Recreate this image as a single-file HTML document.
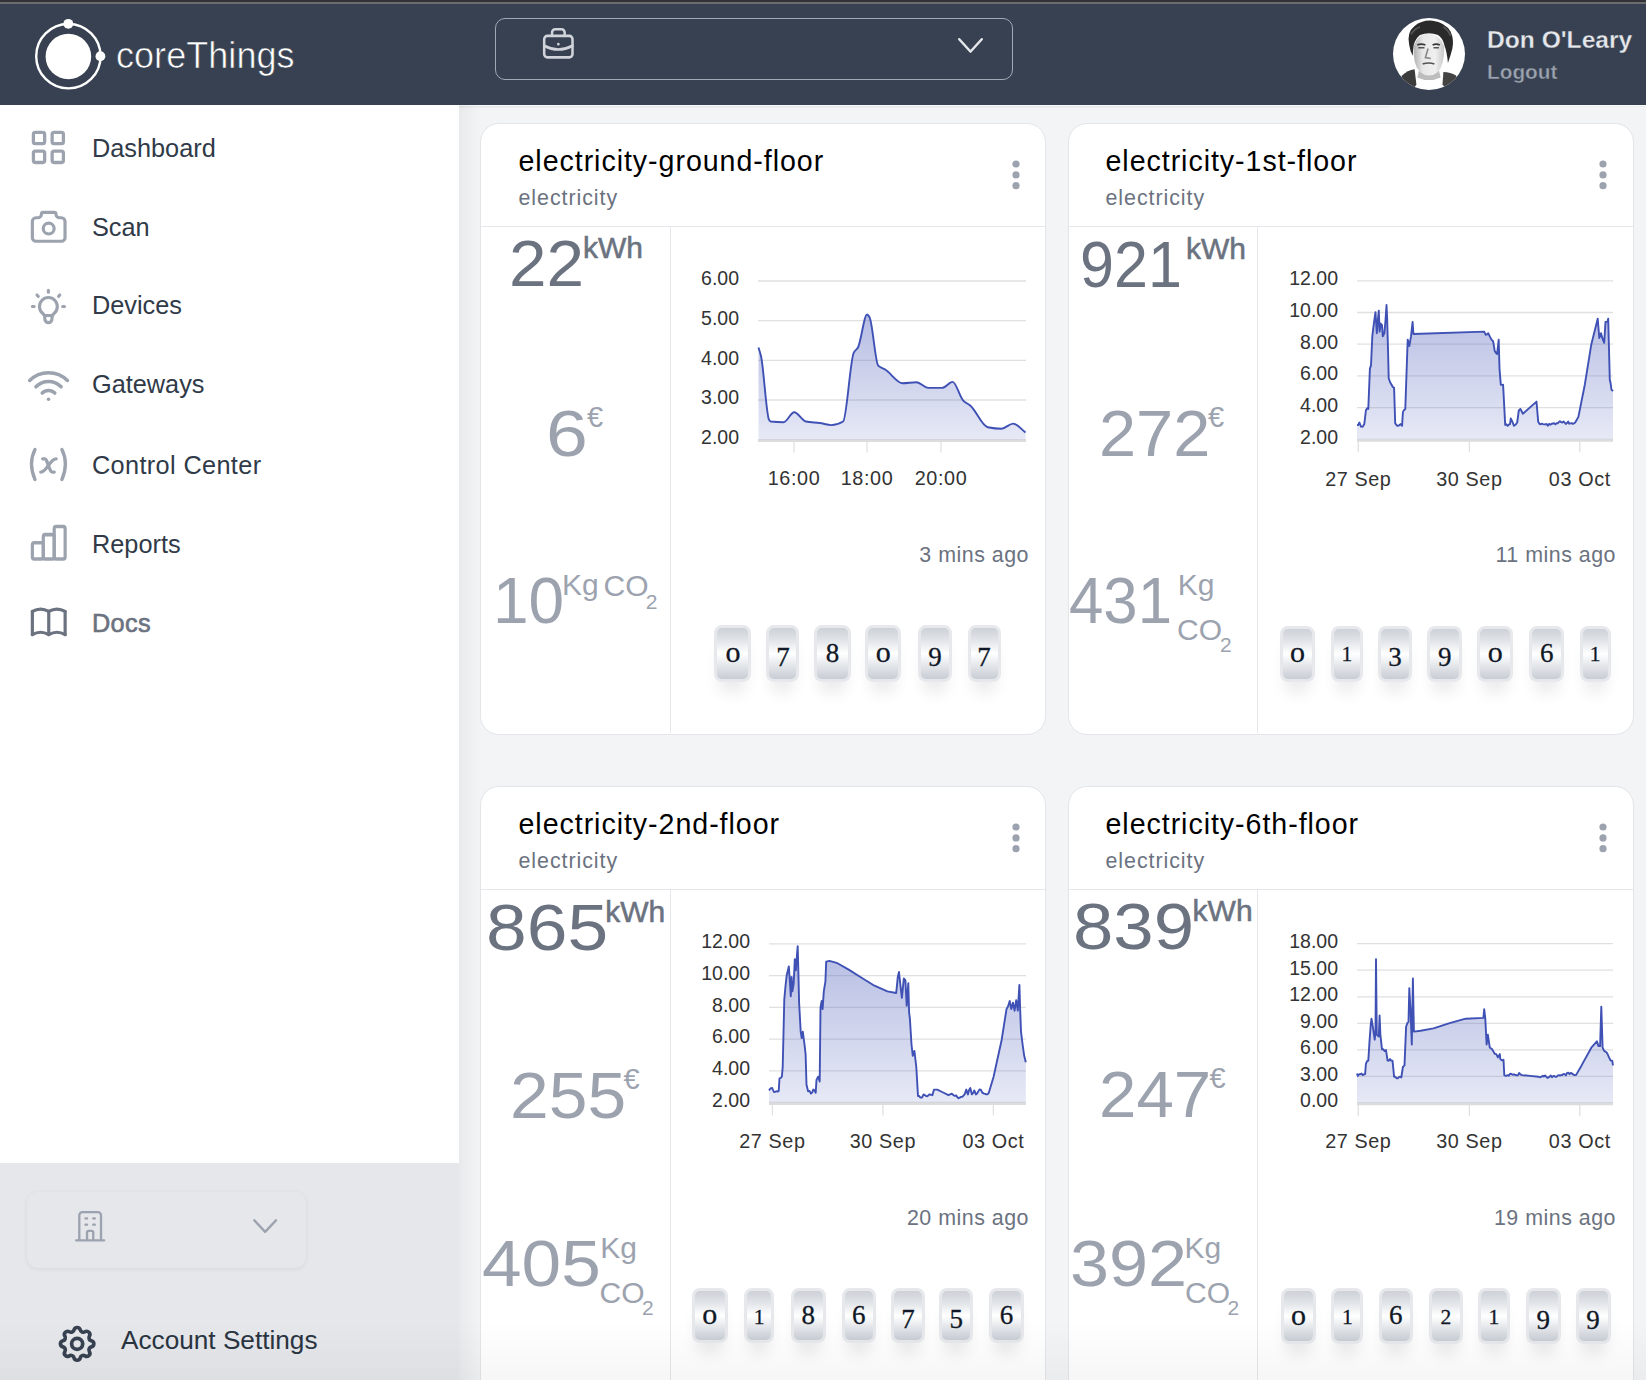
<!DOCTYPE html>
<html><head><meta charset="utf-8"><title>coreThings</title>
<style>
html,body{margin:0;padding:0;}
body{width:1646px;height:1380px;overflow:hidden;position:relative;background:#f3f4f6;font-family:"Liberation Sans", sans-serif;}
</style></head><body>
<div style="position:absolute;left:480px;top:123px;width:564px;height:610px;background:#fff;border:1px solid #e3e5e9;border-radius:19px"></div><div style="position:absolute;left:481px;top:226px;width:564px;height:1px;background:#e5e7eb"></div><div style="position:absolute;left:670px;top:227px;width:1px;height:506px;background:#e5e7eb"></div><div style="position:absolute;top:147.29px;font-size:28.6px;line-height:28.6px;color:#000000;font-weight:400;letter-spacing:0.95px;white-space:nowrap;font-family:'Liberation Sans', sans-serif;left:518.50px;">electricity-ground-floor</div>
<div style="position:absolute;top:187.88px;font-size:21.4px;line-height:21.4px;color:#6b7280;font-weight:400;letter-spacing:0.95px;white-space:nowrap;font-family:'Liberation Sans', sans-serif;left:518.50px;">electricity</div>
<svg style="position:absolute;left:1006px;top:153px" width="20" height="45" viewBox="1006 153 20 45"><circle cx="1016" cy="164.0" r="3.6" fill="#9ca3af"/><circle cx="1016" cy="174.9" r="3.6" fill="#9ca3af"/><circle cx="1016" cy="185.7" r="3.6" fill="#9ca3af"/></svg><div style="position:absolute;top:544.88px;font-size:21.4px;line-height:21.4px;color:#6b7280;font-weight:400;letter-spacing:0.5px;white-space:nowrap;font-family:'Liberation Sans', sans-serif;right:617.00px;">3 mins ago</div>
<div style="position:absolute;top:231.30px;font-size:65.5px;line-height:65.5px;color:#6b7280;font-weight:400;letter-spacing:0px;white-space:nowrap;font-family:'Liberation Sans', sans-serif;left:509.05px;transform:scaleX(1.03);transform-origin:0 0;">22</div>
<div style="position:absolute;top:233.35px;font-size:30px;line-height:30px;color:#6b7280;font-weight:400;letter-spacing:0px;white-space:nowrap;font-family:'Liberation Sans', sans-serif;left:583.00px;-webkit-text-stroke:0.55px currentColor;">kWh</div>
<div style="position:absolute;top:400.55px;font-size:65.5px;line-height:65.5px;color:#9ca3af;font-weight:400;letter-spacing:0px;white-space:nowrap;font-family:'Liberation Sans', sans-serif;left:546.05px;transform:scaleX(1.148);transform-origin:0 0;">6</div>
<div style="position:absolute;top:403.15px;font-size:29px;line-height:29px;color:#9ca3af;font-weight:400;letter-spacing:0px;white-space:nowrap;font-family:'Liberation Sans', sans-serif;left:587.00px;">€</div>
<div style="position:absolute;top:568.25px;font-size:65.5px;line-height:65.5px;color:#9ca3af;font-weight:400;letter-spacing:0px;white-space:nowrap;font-family:'Liberation Sans', sans-serif;left:492.55px;transform:scaleX(0.977);transform-origin:0 0;">10</div>
<div style="position:absolute;top:570.21px;font-size:30px;line-height:30px;color:#9ca3af;font-weight:400;letter-spacing:0px;white-space:nowrap;font-family:'Liberation Sans', sans-serif;left:562.00px;">Kg</div>
<div style="position:absolute;top:570.61px;font-size:30px;line-height:30px;color:#9ca3af;font-weight:400;letter-spacing:0px;white-space:nowrap;font-family:'Liberation Sans', sans-serif;left:603.60px;">CO</div>
<div style="position:absolute;top:591.42px;font-size:21px;line-height:21px;color:#9ca3af;font-weight:400;letter-spacing:0px;white-space:nowrap;font-family:'Liberation Sans', sans-serif;left:645.80px;">2</div>
<svg style="position:absolute;left:671px;top:227px;overflow:visible" width="374" height="380" viewBox="671 227 374 380"><defs><linearGradient id="g481123" x1="0" y1="0" x2="0" y2="1"><stop offset="0" stop-color="#5c6bc0" stop-opacity="0.45"/><stop offset="1" stop-color="#5c6bc0" stop-opacity="0.15"/></linearGradient></defs><line x1="758" x2="1026" y1="281.0" y2="281.0" stroke="#e0e0e0" stroke-width="1.3"/><text x="739" y="285.3" text-anchor="end" font-family="Liberation Sans" font-size="19.5" fill="#333">6.00</text><line x1="758" x2="1026" y1="320.6" y2="320.6" stroke="#e0e0e0" stroke-width="1.3"/><text x="739" y="324.9" text-anchor="end" font-family="Liberation Sans" font-size="19.5" fill="#333">5.00</text><line x1="758" x2="1026" y1="360.3" y2="360.3" stroke="#e0e0e0" stroke-width="1.3"/><text x="739" y="364.6" text-anchor="end" font-family="Liberation Sans" font-size="19.5" fill="#333">4.00</text><line x1="758" x2="1026" y1="400.0" y2="400.0" stroke="#e0e0e0" stroke-width="1.3"/><text x="739" y="404.3" text-anchor="end" font-family="Liberation Sans" font-size="19.5" fill="#333">3.00</text><line x1="758" x2="1026" y1="439.6" y2="439.6" stroke="#e0e0e0" stroke-width="1.3"/><text x="739" y="443.9" text-anchor="end" font-family="Liberation Sans" font-size="19.5" fill="#333">2.00</text><line x1="758" x2="1026" y1="440.8" y2="440.8" stroke="#dcdcdc" stroke-width="2.4"/><line x1="794" x2="794" y1="441.6" y2="452.6" stroke="#e0e0e0" stroke-width="1.3"/><text x="794" y="484.6" text-anchor="middle" font-family="Liberation Sans" font-size="19.8" letter-spacing="0.6" fill="#333">16:00</text><line x1="867" x2="867" y1="441.6" y2="452.6" stroke="#e0e0e0" stroke-width="1.3"/><text x="867" y="484.6" text-anchor="middle" font-family="Liberation Sans" font-size="19.8" letter-spacing="0.6" fill="#333">18:00</text><line x1="941" x2="941" y1="441.6" y2="452.6" stroke="#e0e0e0" stroke-width="1.3"/><text x="941" y="484.6" text-anchor="middle" font-family="Liberation Sans" font-size="19.8" letter-spacing="0.6" fill="#333">20:00</text><path d="M758.5 347.5 C759.4 350.7 760.3 352.6 761.2 357.0 C763.8 369.7 766.4 415.4 769.0 419.8 C769.6 420.8 770.2 421.4 770.8 421.5 C775.1 422.0 779.3 422.3 783.6 422.3 C787.1 422.3 790.7 412.3 794.2 412.3 C798.1 412.3 802.0 420.8 805.9 421.5 C810.5 422.4 815.1 422.4 819.7 423.0 C823.6 423.5 827.5 425.1 831.4 425.1 C835.3 425.1 839.2 423.8 843.1 421.5 C846.6 419.4 850.2 360.1 853.7 352.8 C855.1 349.8 856.6 350.1 858.0 347.5 C861.0 341.9 864.1 314.5 867.1 314.5 C868.0 314.5 868.8 315.9 869.7 317.7 C872.5 323.4 875.4 362.7 878.2 365.6 C880.7 368.1 883.1 368.2 885.6 369.8 C891.3 373.5 896.9 383.2 902.6 383.2 C907.2 383.2 911.9 382.2 916.5 382.2 C920.4 382.2 924.2 387.9 928.1 387.9 C932.7 387.9 937.4 387.9 942.0 387.9 C945.5 387.9 949.1 381.9 952.6 381.9 C956.1 381.9 959.7 397.1 963.2 400.7 C965.7 403.2 968.2 403.7 970.7 406.0 C976.4 411.1 982.0 426.1 987.7 427.2 C992.3 428.1 996.9 428.7 1001.5 428.7 C1005.4 428.7 1009.3 423.6 1013.2 423.6 C1017.3 423.6 1021.4 429.5 1025.5 432.5 L1025.5 439.6 L758.5 439.6 Z" fill="url(#g481123)" stroke="none"/><path d="M758.5 347.5 C759.4 350.7 760.3 352.6 761.2 357.0 C763.8 369.7 766.4 415.4 769.0 419.8 C769.6 420.8 770.2 421.4 770.8 421.5 C775.1 422.0 779.3 422.3 783.6 422.3 C787.1 422.3 790.7 412.3 794.2 412.3 C798.1 412.3 802.0 420.8 805.9 421.5 C810.5 422.4 815.1 422.4 819.7 423.0 C823.6 423.5 827.5 425.1 831.4 425.1 C835.3 425.1 839.2 423.8 843.1 421.5 C846.6 419.4 850.2 360.1 853.7 352.8 C855.1 349.8 856.6 350.1 858.0 347.5 C861.0 341.9 864.1 314.5 867.1 314.5 C868.0 314.5 868.8 315.9 869.7 317.7 C872.5 323.4 875.4 362.7 878.2 365.6 C880.7 368.1 883.1 368.2 885.6 369.8 C891.3 373.5 896.9 383.2 902.6 383.2 C907.2 383.2 911.9 382.2 916.5 382.2 C920.4 382.2 924.2 387.9 928.1 387.9 C932.7 387.9 937.4 387.9 942.0 387.9 C945.5 387.9 949.1 381.9 952.6 381.9 C956.1 381.9 959.7 397.1 963.2 400.7 C965.7 403.2 968.2 403.7 970.7 406.0 C976.4 411.1 982.0 426.1 987.7 427.2 C992.3 428.1 996.9 428.7 1001.5 428.7 C1005.4 428.7 1009.3 423.6 1013.2 423.6 C1017.3 423.6 1021.4 429.5 1025.5 432.5" fill="none" stroke="#3f51b5" stroke-width="1.9" stroke-linejoin="round"/></svg>
<div style="position:absolute;left:714.2px;top:625.3px;width:37.3px;height:56.7px;box-sizing:border-box;border:3px solid #e6e8ec;border-radius:8px;background:linear-gradient(to bottom,#cdd1d8 0%,#e2e5e9 25%,#ffffff 50%,#e2e5e9 75%,#c8cdd5 100%);box-shadow:0 16px 16px -6px rgba(0,0,0,0.09)"></div>
<div style="position:absolute;left:712.9px;width:40px;text-align:center;top:637.0px;font-family:'Liberation Serif', serif;font-size:30px;line-height:30px;color:#111827;font-weight:400;-webkit-text-stroke:0.3px #111827">o</div>
<div style="position:absolute;left:766.2px;top:625.3px;width:33.3px;height:56.7px;box-sizing:border-box;border:3px solid #e6e8ec;border-radius:8px;background:linear-gradient(to bottom,#cdd1d8 0%,#e2e5e9 25%,#ffffff 50%,#e2e5e9 75%,#c8cdd5 100%);box-shadow:0 16px 16px -6px rgba(0,0,0,0.09)"></div>
<div style="position:absolute;left:762.9px;width:40px;text-align:center;top:643.8px;font-family:'Liberation Serif', serif;font-size:27px;line-height:27px;color:#111827;font-weight:400;-webkit-text-stroke:0.3px #111827">7</div>
<div style="position:absolute;left:814.3px;top:625.3px;width:36.5px;height:56.7px;box-sizing:border-box;border:3px solid #e6e8ec;border-radius:8px;background:linear-gradient(to bottom,#cdd1d8 0%,#e2e5e9 25%,#ffffff 50%,#e2e5e9 75%,#c8cdd5 100%);box-shadow:0 16px 16px -6px rgba(0,0,0,0.09)"></div>
<div style="position:absolute;left:812.5px;width:40px;text-align:center;top:639.5px;font-family:'Liberation Serif', serif;font-size:27px;line-height:27px;color:#111827;font-weight:400;-webkit-text-stroke:0.3px #111827">8</div>
<div style="position:absolute;left:865.3px;top:625.3px;width:36.1px;height:56.7px;box-sizing:border-box;border:3px solid #e6e8ec;border-radius:8px;background:linear-gradient(to bottom,#cdd1d8 0%,#e2e5e9 25%,#ffffff 50%,#e2e5e9 75%,#c8cdd5 100%);box-shadow:0 16px 16px -6px rgba(0,0,0,0.09)"></div>
<div style="position:absolute;left:863.3px;width:40px;text-align:center;top:637.0px;font-family:'Liberation Serif', serif;font-size:30px;line-height:30px;color:#111827;font-weight:400;-webkit-text-stroke:0.3px #111827">o</div>
<div style="position:absolute;left:917.5px;top:625.3px;width:34.9px;height:56.7px;box-sizing:border-box;border:3px solid #e6e8ec;border-radius:8px;background:linear-gradient(to bottom,#cdd1d8 0%,#e2e5e9 25%,#ffffff 50%,#e2e5e9 75%,#c8cdd5 100%);box-shadow:0 16px 16px -6px rgba(0,0,0,0.09)"></div>
<div style="position:absolute;left:915.0px;width:40px;text-align:center;top:643.8px;font-family:'Liberation Serif', serif;font-size:27px;line-height:27px;color:#111827;font-weight:400;-webkit-text-stroke:0.3px #111827">9</div>
<div style="position:absolute;left:967.5px;top:625.3px;width:33.1px;height:56.7px;box-sizing:border-box;border:3px solid #e6e8ec;border-radius:8px;background:linear-gradient(to bottom,#cdd1d8 0%,#e2e5e9 25%,#ffffff 50%,#e2e5e9 75%,#c8cdd5 100%);box-shadow:0 16px 16px -6px rgba(0,0,0,0.09)"></div>
<div style="position:absolute;left:964.0px;width:40px;text-align:center;top:643.8px;font-family:'Liberation Serif', serif;font-size:27px;line-height:27px;color:#111827;font-weight:400;-webkit-text-stroke:0.3px #111827">7</div>
<div style="position:absolute;left:1068px;top:123px;width:564px;height:610px;background:#fff;border:1px solid #e3e5e9;border-radius:19px"></div><div style="position:absolute;left:1069px;top:226px;width:564px;height:1px;background:#e5e7eb"></div><div style="position:absolute;left:1257px;top:227px;width:1px;height:506px;background:#e5e7eb"></div><div style="position:absolute;top:147.29px;font-size:28.6px;line-height:28.6px;color:#000000;font-weight:400;letter-spacing:0.95px;white-space:nowrap;font-family:'Liberation Sans', sans-serif;left:1105.50px;">electricity-1st-floor</div>
<div style="position:absolute;top:187.88px;font-size:21.4px;line-height:21.4px;color:#6b7280;font-weight:400;letter-spacing:0.95px;white-space:nowrap;font-family:'Liberation Sans', sans-serif;left:1105.50px;">electricity</div>
<svg style="position:absolute;left:1593px;top:153px" width="20" height="45" viewBox="1593 153 20 45"><circle cx="1603" cy="164.0" r="3.6" fill="#9ca3af"/><circle cx="1603" cy="174.9" r="3.6" fill="#9ca3af"/><circle cx="1603" cy="185.7" r="3.6" fill="#9ca3af"/></svg><div style="position:absolute;top:544.88px;font-size:21.4px;line-height:21.4px;color:#6b7280;font-weight:400;letter-spacing:0.5px;white-space:nowrap;font-family:'Liberation Sans', sans-serif;right:30.00px;">11 mins ago</div>
<div style="position:absolute;top:232.15px;font-size:65.5px;line-height:65.5px;color:#6b7280;font-weight:400;letter-spacing:0px;white-space:nowrap;font-family:'Liberation Sans', sans-serif;left:1080.05px;transform:scaleX(0.932);transform-origin:0 0;">921</div>
<div style="position:absolute;top:234.21px;font-size:30px;line-height:30px;color:#6b7280;font-weight:400;letter-spacing:0px;white-space:nowrap;font-family:'Liberation Sans', sans-serif;left:1186.00px;-webkit-text-stroke:0.55px currentColor;">kWh</div>
<div style="position:absolute;top:400.55px;font-size:65.5px;line-height:65.5px;color:#9ca3af;font-weight:400;letter-spacing:0px;white-space:nowrap;font-family:'Liberation Sans', sans-serif;left:1099.05px;transform:scaleX(1.019);transform-origin:0 0;">272</div>
<div style="position:absolute;top:403.15px;font-size:29px;line-height:29px;color:#9ca3af;font-weight:400;letter-spacing:0px;white-space:nowrap;font-family:'Liberation Sans', sans-serif;left:1208.00px;">€</div>
<div style="position:absolute;top:568.35px;font-size:65.5px;line-height:65.5px;color:#9ca3af;font-weight:400;letter-spacing:0px;white-space:nowrap;font-family:'Liberation Sans', sans-serif;left:1069.05px;transform:scaleX(0.942);transform-origin:0 0;">431</div>
<div style="position:absolute;top:570.30px;font-size:30px;line-height:30px;color:#9ca3af;font-weight:400;letter-spacing:0px;white-space:nowrap;font-family:'Liberation Sans', sans-serif;left:1177.80px;">Kg</div>
<div style="position:absolute;top:614.80px;font-size:30px;line-height:30px;color:#9ca3af;font-weight:400;letter-spacing:0px;white-space:nowrap;font-family:'Liberation Sans', sans-serif;left:1177.00px;">CO</div>
<div style="position:absolute;top:633.72px;font-size:21px;line-height:21px;color:#9ca3af;font-weight:400;letter-spacing:0px;white-space:nowrap;font-family:'Liberation Sans', sans-serif;left:1220.00px;">2</div>
<svg style="position:absolute;left:1258px;top:227px;overflow:visible" width="374" height="380" viewBox="1258 227 374 380"><defs><linearGradient id="g1068123" x1="0" y1="0" x2="0" y2="1"><stop offset="0" stop-color="#5c6bc0" stop-opacity="0.45"/><stop offset="1" stop-color="#5c6bc0" stop-opacity="0.15"/></linearGradient></defs><line x1="1357" x2="1613" y1="280.8" y2="280.8" stroke="#e0e0e0" stroke-width="1.3"/><text x="1338" y="285.1" text-anchor="end" font-family="Liberation Sans" font-size="19.5" fill="#333">12.00</text><line x1="1357" x2="1613" y1="312.5" y2="312.5" stroke="#e0e0e0" stroke-width="1.3"/><text x="1338" y="316.8" text-anchor="end" font-family="Liberation Sans" font-size="19.5" fill="#333">10.00</text><line x1="1357" x2="1613" y1="344.2" y2="344.2" stroke="#e0e0e0" stroke-width="1.3"/><text x="1338" y="348.5" text-anchor="end" font-family="Liberation Sans" font-size="19.5" fill="#333">8.00</text><line x1="1357" x2="1613" y1="375.9" y2="375.9" stroke="#e0e0e0" stroke-width="1.3"/><text x="1338" y="380.2" text-anchor="end" font-family="Liberation Sans" font-size="19.5" fill="#333">6.00</text><line x1="1357" x2="1613" y1="407.6" y2="407.6" stroke="#e0e0e0" stroke-width="1.3"/><text x="1338" y="411.9" text-anchor="end" font-family="Liberation Sans" font-size="19.5" fill="#333">4.00</text><line x1="1357" x2="1613" y1="439.3" y2="439.3" stroke="#e0e0e0" stroke-width="1.3"/><text x="1338" y="443.6" text-anchor="end" font-family="Liberation Sans" font-size="19.5" fill="#333">2.00</text><line x1="1357" x2="1613" y1="440.5" y2="440.5" stroke="#dcdcdc" stroke-width="2.4"/><line x1="1358.3" x2="1358.3" y1="441.3" y2="452.3" stroke="#e0e0e0" stroke-width="1.3"/><text x="1358.3" y="485.6" text-anchor="middle" font-family="Liberation Sans" font-size="19.8" letter-spacing="0.6" fill="#333">27 Sep</text><line x1="1469.4" x2="1469.4" y1="441.3" y2="452.3" stroke="#e0e0e0" stroke-width="1.3"/><text x="1469.4" y="485.6" text-anchor="middle" font-family="Liberation Sans" font-size="19.8" letter-spacing="0.6" fill="#333">30 Sep</text><line x1="1579.8" x2="1579.8" y1="441.3" y2="452.3" stroke="#e0e0e0" stroke-width="1.3"/><text x="1579.8" y="485.6" text-anchor="middle" font-family="Liberation Sans" font-size="19.8" letter-spacing="0.6" fill="#333">03 Oct</text><path d="M1357.0 424.9 L1358.2 425.1 L1359.4 422.5 L1361.0 426.6 L1362.7 426.7 L1364.3 424.1 L1365.9 410.5 L1367.1 408.3 L1368.3 408.9 L1369.9 368.6 L1371.0 365.4 L1372.3 336.4 L1373.9 323.1 L1375.5 312.2 L1376.8 333.2 L1378.0 318.7 L1378.8 310.6 L1379.6 331.6 L1380.7 323.5 L1382.0 325.1 L1382.8 336.4 L1384.4 333.2 L1385.5 320.3 L1386.5 305.0 L1387.1 317.1 L1388.1 352.5 L1388.7 378.3 L1390.2 382.5 L1391.6 384.7 L1392.8 387.0 L1394.1 387.9 L1395.2 423.3 L1397.3 425.8 L1398.9 425.5 L1400.5 424.1 L1402.1 425.8 L1402.9 412.1 L1404.1 409.9 L1405.3 408.9 L1406.9 362.2 L1407.7 339.6 L1409.3 346.1 L1411.0 336.4 L1412.6 321.9 L1413.4 334.0 L1484.2 331.6 L1485.8 334.8 L1487.0 334.3 L1488.2 333.2 L1489.8 336.4 L1491.5 339.6 L1493.1 341.2 L1494.7 350.9 L1495.9 352.8 L1497.1 354.1 L1498.7 339.6 L1499.5 368.6 L1500.8 384.7 L1501.9 384.9 L1503.1 384.7 L1505.2 424.9 L1506.4 424.3 L1507.6 425.8 L1508.8 424.7 L1510.0 424.1 L1510.8 418.5 L1512.4 421.8 L1514.0 425.8 L1515.6 424.8 L1517.2 422.5 L1518.8 410.5 L1520.4 408.9 L1522.9 413.7 L1536.5 401.6 L1538.2 421.7 L1539.4 423.8 L1540.6 424.3 L1541.8 423.7 L1543.0 424.1 L1544.2 424.4 L1545.4 424.3 L1546.6 424.0 L1547.8 425.8 L1549.1 423.9 L1550.4 424.7 L1551.7 423.8 L1553.0 423.5 L1554.3 423.3 L1555.4 424.4 L1556.6 423.2 L1557.7 423.2 L1558.9 422.1 L1560.0 421.3 L1561.2 422.1 L1562.3 422.5 L1563.5 421.5 L1564.7 422.6 L1565.8 424.0 L1567.0 423.1 L1568.2 421.6 L1569.3 423.7 L1570.5 423.4 L1571.7 423.2 L1572.8 423.8 L1574.0 423.3 L1575.2 422.5 L1578.4 416.9 L1584.8 384.7 L1591.3 344.4 L1597.7 318.7 L1599.3 338.0 L1601.0 333.2 L1602.6 338.9 L1604.2 342.8 L1605.5 321.9 L1607.4 321.9 L1608.2 318.7 L1609.8 379.9 L1610.6 383.1 L1611.4 389.5 L1613.0 391.1 L1613.0 439.3 L1357.0 439.3 Z" fill="url(#g1068123)" stroke="none"/><path d="M1357.0 424.9 L1358.2 425.1 L1359.4 422.5 L1361.0 426.6 L1362.7 426.7 L1364.3 424.1 L1365.9 410.5 L1367.1 408.3 L1368.3 408.9 L1369.9 368.6 L1371.0 365.4 L1372.3 336.4 L1373.9 323.1 L1375.5 312.2 L1376.8 333.2 L1378.0 318.7 L1378.8 310.6 L1379.6 331.6 L1380.7 323.5 L1382.0 325.1 L1382.8 336.4 L1384.4 333.2 L1385.5 320.3 L1386.5 305.0 L1387.1 317.1 L1388.1 352.5 L1388.7 378.3 L1390.2 382.5 L1391.6 384.7 L1392.8 387.0 L1394.1 387.9 L1395.2 423.3 L1397.3 425.8 L1398.9 425.5 L1400.5 424.1 L1402.1 425.8 L1402.9 412.1 L1404.1 409.9 L1405.3 408.9 L1406.9 362.2 L1407.7 339.6 L1409.3 346.1 L1411.0 336.4 L1412.6 321.9 L1413.4 334.0 L1484.2 331.6 L1485.8 334.8 L1487.0 334.3 L1488.2 333.2 L1489.8 336.4 L1491.5 339.6 L1493.1 341.2 L1494.7 350.9 L1495.9 352.8 L1497.1 354.1 L1498.7 339.6 L1499.5 368.6 L1500.8 384.7 L1501.9 384.9 L1503.1 384.7 L1505.2 424.9 L1506.4 424.3 L1507.6 425.8 L1508.8 424.7 L1510.0 424.1 L1510.8 418.5 L1512.4 421.8 L1514.0 425.8 L1515.6 424.8 L1517.2 422.5 L1518.8 410.5 L1520.4 408.9 L1522.9 413.7 L1536.5 401.6 L1538.2 421.7 L1539.4 423.8 L1540.6 424.3 L1541.8 423.7 L1543.0 424.1 L1544.2 424.4 L1545.4 424.3 L1546.6 424.0 L1547.8 425.8 L1549.1 423.9 L1550.4 424.7 L1551.7 423.8 L1553.0 423.5 L1554.3 423.3 L1555.4 424.4 L1556.6 423.2 L1557.7 423.2 L1558.9 422.1 L1560.0 421.3 L1561.2 422.1 L1562.3 422.5 L1563.5 421.5 L1564.7 422.6 L1565.8 424.0 L1567.0 423.1 L1568.2 421.6 L1569.3 423.7 L1570.5 423.4 L1571.7 423.2 L1572.8 423.8 L1574.0 423.3 L1575.2 422.5 L1578.4 416.9 L1584.8 384.7 L1591.3 344.4 L1597.7 318.7 L1599.3 338.0 L1601.0 333.2 L1602.6 338.9 L1604.2 342.8 L1605.5 321.9 L1607.4 321.9 L1608.2 318.7 L1609.8 379.9 L1610.6 383.1 L1611.4 389.5 L1613.0 391.1" fill="none" stroke="#3f51b5" stroke-width="1.9" stroke-linejoin="round"/></svg>
<div style="position:absolute;left:1279.6px;top:625.5px;width:35.7px;height:56.5px;box-sizing:border-box;border:3px solid #e6e8ec;border-radius:8px;background:linear-gradient(to bottom,#cdd1d8 0%,#e2e5e9 25%,#ffffff 50%,#e2e5e9 75%,#c8cdd5 100%);box-shadow:0 16px 16px -6px rgba(0,0,0,0.09)"></div>
<div style="position:absolute;left:1277.4px;width:40px;text-align:center;top:637.2px;font-family:'Liberation Serif', serif;font-size:30px;line-height:30px;color:#111827;font-weight:400;-webkit-text-stroke:0.3px #111827">o</div>
<div style="position:absolute;left:1331.3px;top:625.5px;width:31.3px;height:56.5px;box-sizing:border-box;border:3px solid #e6e8ec;border-radius:8px;background:linear-gradient(to bottom,#cdd1d8 0%,#e2e5e9 25%,#ffffff 50%,#e2e5e9 75%,#c8cdd5 100%);box-shadow:0 16px 16px -6px rgba(0,0,0,0.09)"></div>
<div style="position:absolute;left:1326.9px;width:40px;text-align:center;top:644.4px;font-family:'Liberation Serif', serif;font-size:21.5px;line-height:21.5px;color:#111827;font-weight:400;-webkit-text-stroke:0.3px #111827">1</div>
<div style="position:absolute;left:1377.5px;top:625.5px;width:34.9px;height:56.5px;box-sizing:border-box;border:3px solid #e6e8ec;border-radius:8px;background:linear-gradient(to bottom,#cdd1d8 0%,#e2e5e9 25%,#ffffff 50%,#e2e5e9 75%,#c8cdd5 100%);box-shadow:0 16px 16px -6px rgba(0,0,0,0.09)"></div>
<div style="position:absolute;left:1375.0px;width:40px;text-align:center;top:644.0px;font-family:'Liberation Serif', serif;font-size:27px;line-height:27px;color:#111827;font-weight:400;-webkit-text-stroke:0.3px #111827">3</div>
<div style="position:absolute;left:1427.4px;top:625.5px;width:34.9px;height:56.5px;box-sizing:border-box;border:3px solid #e6e8ec;border-radius:8px;background:linear-gradient(to bottom,#cdd1d8 0%,#e2e5e9 25%,#ffffff 50%,#e2e5e9 75%,#c8cdd5 100%);box-shadow:0 16px 16px -6px rgba(0,0,0,0.09)"></div>
<div style="position:absolute;left:1424.8px;width:40px;text-align:center;top:644.0px;font-family:'Liberation Serif', serif;font-size:27px;line-height:27px;color:#111827;font-weight:400;-webkit-text-stroke:0.3px #111827">9</div>
<div style="position:absolute;left:1477.2px;top:625.5px;width:36.0px;height:56.5px;box-sizing:border-box;border:3px solid #e6e8ec;border-radius:8px;background:linear-gradient(to bottom,#cdd1d8 0%,#e2e5e9 25%,#ffffff 50%,#e2e5e9 75%,#c8cdd5 100%);box-shadow:0 16px 16px -6px rgba(0,0,0,0.09)"></div>
<div style="position:absolute;left:1475.2px;width:40px;text-align:center;top:637.2px;font-family:'Liberation Serif', serif;font-size:30px;line-height:30px;color:#111827;font-weight:400;-webkit-text-stroke:0.3px #111827">o</div>
<div style="position:absolute;left:1529.2px;top:625.5px;width:35.2px;height:56.5px;box-sizing:border-box;border:3px solid #e6e8ec;border-radius:8px;background:linear-gradient(to bottom,#cdd1d8 0%,#e2e5e9 25%,#ffffff 50%,#e2e5e9 75%,#c8cdd5 100%);box-shadow:0 16px 16px -6px rgba(0,0,0,0.09)"></div>
<div style="position:absolute;left:1526.8px;width:40px;text-align:center;top:639.8px;font-family:'Liberation Serif', serif;font-size:27px;line-height:27px;color:#111827;font-weight:400;-webkit-text-stroke:0.3px #111827">6</div>
<div style="position:absolute;left:1579.8px;top:625.5px;width:30.9px;height:56.5px;box-sizing:border-box;border:3px solid #e6e8ec;border-radius:8px;background:linear-gradient(to bottom,#cdd1d8 0%,#e2e5e9 25%,#ffffff 50%,#e2e5e9 75%,#c8cdd5 100%);box-shadow:0 16px 16px -6px rgba(0,0,0,0.09)"></div>
<div style="position:absolute;left:1575.2px;width:40px;text-align:center;top:644.4px;font-family:'Liberation Serif', serif;font-size:21.5px;line-height:21.5px;color:#111827;font-weight:400;-webkit-text-stroke:0.3px #111827">1</div>
<div style="position:absolute;left:480px;top:786px;width:564px;height:640px;background:#fff;border:1px solid #e3e5e9;border-radius:19px"></div><div style="position:absolute;left:481px;top:889px;width:564px;height:1px;background:#e5e7eb"></div><div style="position:absolute;left:670px;top:890px;width:1px;height:536px;background:#e5e7eb"></div><div style="position:absolute;top:810.29px;font-size:28.6px;line-height:28.6px;color:#000000;font-weight:400;letter-spacing:0.95px;white-space:nowrap;font-family:'Liberation Sans', sans-serif;left:518.50px;">electricity-2nd-floor</div>
<div style="position:absolute;top:850.88px;font-size:21.4px;line-height:21.4px;color:#6b7280;font-weight:400;letter-spacing:0.95px;white-space:nowrap;font-family:'Liberation Sans', sans-serif;left:518.50px;">electricity</div>
<svg style="position:absolute;left:1006px;top:816px" width="20" height="45" viewBox="1006 816 20 45"><circle cx="1016" cy="827.0" r="3.6" fill="#9ca3af"/><circle cx="1016" cy="837.9" r="3.6" fill="#9ca3af"/><circle cx="1016" cy="848.7" r="3.6" fill="#9ca3af"/></svg><div style="position:absolute;top:1207.88px;font-size:21.4px;line-height:21.4px;color:#6b7280;font-weight:400;letter-spacing:0.5px;white-space:nowrap;font-family:'Liberation Sans', sans-serif;right:617.00px;">20 mins ago</div>
<div style="position:absolute;top:894.85px;font-size:65.5px;line-height:65.5px;color:#6b7280;font-weight:400;letter-spacing:0px;white-space:nowrap;font-family:'Liberation Sans', sans-serif;left:486.05px;transform:scaleX(1.117);transform-origin:0 0;">865</div>
<div style="position:absolute;top:896.90px;font-size:30px;line-height:30px;color:#6b7280;font-weight:400;letter-spacing:0px;white-space:nowrap;font-family:'Liberation Sans', sans-serif;left:605.30px;-webkit-text-stroke:0.55px currentColor;">kWh</div>
<div style="position:absolute;top:1062.55px;font-size:65.5px;line-height:65.5px;color:#9ca3af;font-weight:400;letter-spacing:0px;white-space:nowrap;font-family:'Liberation Sans', sans-serif;left:510.25px;transform:scaleX(1.063);transform-origin:0 0;">255</div>
<div style="position:absolute;top:1065.15px;font-size:29px;line-height:29px;color:#9ca3af;font-weight:400;letter-spacing:0px;white-space:nowrap;font-family:'Liberation Sans', sans-serif;left:623.50px;">€</div>
<div style="position:absolute;top:1231.25px;font-size:65.5px;line-height:65.5px;color:#9ca3af;font-weight:400;letter-spacing:0px;white-space:nowrap;font-family:'Liberation Sans', sans-serif;left:481.85px;transform:scaleX(1.087);transform-origin:0 0;">405</div>
<div style="position:absolute;top:1233.21px;font-size:30px;line-height:30px;color:#9ca3af;font-weight:400;letter-spacing:0px;white-space:nowrap;font-family:'Liberation Sans', sans-serif;left:600.20px;">Kg</div>
<div style="position:absolute;top:1277.71px;font-size:30px;line-height:30px;color:#9ca3af;font-weight:400;letter-spacing:0px;white-space:nowrap;font-family:'Liberation Sans', sans-serif;left:599.50px;">CO</div>
<div style="position:absolute;top:1296.62px;font-size:21px;line-height:21px;color:#9ca3af;font-weight:400;letter-spacing:0px;white-space:nowrap;font-family:'Liberation Sans', sans-serif;left:642.00px;">2</div>
<svg style="position:absolute;left:671px;top:890px;overflow:visible" width="374" height="380" viewBox="671 890 374 380"><defs><linearGradient id="g481786" x1="0" y1="0" x2="0" y2="1"><stop offset="0" stop-color="#5c6bc0" stop-opacity="0.45"/><stop offset="1" stop-color="#5c6bc0" stop-opacity="0.15"/></linearGradient></defs><line x1="769" x2="1026" y1="943.9" y2="943.9" stroke="#e0e0e0" stroke-width="1.3"/><text x="750" y="948.2" text-anchor="end" font-family="Liberation Sans" font-size="19.5" fill="#333">12.00</text><line x1="769" x2="1026" y1="975.6" y2="975.6" stroke="#e0e0e0" stroke-width="1.3"/><text x="750" y="979.9" text-anchor="end" font-family="Liberation Sans" font-size="19.5" fill="#333">10.00</text><line x1="769" x2="1026" y1="1007.3" y2="1007.3" stroke="#e0e0e0" stroke-width="1.3"/><text x="750" y="1011.6" text-anchor="end" font-family="Liberation Sans" font-size="19.5" fill="#333">8.00</text><line x1="769" x2="1026" y1="1039.1" y2="1039.1" stroke="#e0e0e0" stroke-width="1.3"/><text x="750" y="1043.4" text-anchor="end" font-family="Liberation Sans" font-size="19.5" fill="#333">6.00</text><line x1="769" x2="1026" y1="1070.8" y2="1070.8" stroke="#e0e0e0" stroke-width="1.3"/><text x="750" y="1075.1" text-anchor="end" font-family="Liberation Sans" font-size="19.5" fill="#333">4.00</text><line x1="769" x2="1026" y1="1102.5" y2="1102.5" stroke="#e0e0e0" stroke-width="1.3"/><text x="750" y="1106.8" text-anchor="end" font-family="Liberation Sans" font-size="19.5" fill="#333">2.00</text><line x1="769" x2="1026" y1="1103.7" y2="1103.7" stroke="#dcdcdc" stroke-width="2.4"/><line x1="772.4" x2="772.4" y1="1104.5" y2="1115.5" stroke="#e0e0e0" stroke-width="1.3"/><text x="772.4" y="1148" text-anchor="middle" font-family="Liberation Sans" font-size="19.8" letter-spacing="0.6" fill="#333">27 Sep</text><line x1="882.9" x2="882.9" y1="1104.5" y2="1115.5" stroke="#e0e0e0" stroke-width="1.3"/><text x="882.9" y="1148" text-anchor="middle" font-family="Liberation Sans" font-size="19.8" letter-spacing="0.6" fill="#333">30 Sep</text><line x1="993.4" x2="993.4" y1="1104.5" y2="1115.5" stroke="#e0e0e0" stroke-width="1.3"/><text x="993.4" y="1148" text-anchor="middle" font-family="Liberation Sans" font-size="19.8" letter-spacing="0.6" fill="#333">03 Oct</text><path d="M769.0 1090.4 L770.6 1088.4 L772.2 1088.0 L773.9 1092.0 L775.1 1091.9 L776.3 1091.2 L777.5 1091.7 L778.7 1091.2 L779.5 1078.3 L780.7 1077.9 L781.9 1076.7 L782.7 1067.0 L784.3 999.4 L785.5 986.0 L786.7 975.2 L788.8 966.4 L790.0 983.3 L790.8 996.2 L791.6 976.9 L792.4 991.4 L793.7 983.3 L794.8 959.1 L795.9 970.4 L796.9 955.9 L797.7 946.3 L798.5 976.9 L799.1 1002.6 L800.7 1031.6 L801.7 1038.0 L802.8 1031.6 L804.5 1044.5 L805.6 1054.1 L806.5 1084.7 L808.1 1091.2 L809.5 1090.9 L810.9 1093.6 L812.1 1092.6 L813.3 1089.6 L814.5 1090.4 L815.7 1092.8 L816.5 1079.9 L818.1 1076.7 L819.7 1081.5 L820.5 1007.5 L821.7 1001.0 L822.6 1009.1 L823.8 991.4 L825.4 981.7 L826.2 961.6 L829.4 960.8 L837.5 963.2 L848.7 969.6 L861.6 977.7 L874.5 985.7 L887.4 991.4 L896.2 993.0 L897.8 976.9 L899.0 972.0 L900.2 983.3 L901.9 997.8 L903.8 978.5 L905.4 980.1 L906.7 1005.8 L908.3 983.3 L909.1 1012.3 L909.9 1018.7 L911.5 1044.5 L912.8 1055.8 L914.4 1050.9 L916.3 1067.0 L918.0 1096.0 L919.2 1096.0 L920.4 1097.6 L922.0 1097.5 L923.6 1094.4 L924.8 1095.1 L926.0 1096.0 L927.6 1096.2 L929.2 1094.4 L930.8 1094.7 L932.4 1095.2 L934.0 1089.6 L937.3 1089.6 L942.1 1092.0 L948.5 1095.2 L951.8 1093.6 L953.4 1095.2 L955.0 1096.0 L956.2 1095.4 L957.4 1097.2 L958.6 1098.3 L959.8 1097.6 L961.0 1096.9 L962.2 1096.7 L963.4 1095.7 L964.6 1094.4 L966.3 1089.6 L967.9 1094.4 L969.1 1089.9 L970.3 1088.0 L971.9 1094.4 L973.1 1093.2 L974.3 1090.4 L975.9 1094.4 L977.1 1093.5 L978.3 1091.4 L979.5 1089.4 L980.8 1089.6 L982.4 1092.7 L984.0 1093.6 L985.2 1093.9 L986.4 1094.4 L987.6 1094.2 L988.8 1092.8 L993.6 1076.7 L1001.7 1039.7 L1006.5 1009.1 L1008.1 1006.2 L1009.7 1001.0 L1011.3 1009.1 L1013.0 1002.6 L1014.6 1010.7 L1016.2 1000.2 L1017.8 1010.7 L1019.4 984.9 L1020.2 1010.7 L1021.0 1031.6 L1022.6 1044.5 L1024.2 1055.8 L1025.8 1062.2 L1025.8 1102.5 L769.0 1102.5 Z" fill="url(#g481786)" stroke="none"/><path d="M769.0 1090.4 L770.6 1088.4 L772.2 1088.0 L773.9 1092.0 L775.1 1091.9 L776.3 1091.2 L777.5 1091.7 L778.7 1091.2 L779.5 1078.3 L780.7 1077.9 L781.9 1076.7 L782.7 1067.0 L784.3 999.4 L785.5 986.0 L786.7 975.2 L788.8 966.4 L790.0 983.3 L790.8 996.2 L791.6 976.9 L792.4 991.4 L793.7 983.3 L794.8 959.1 L795.9 970.4 L796.9 955.9 L797.7 946.3 L798.5 976.9 L799.1 1002.6 L800.7 1031.6 L801.7 1038.0 L802.8 1031.6 L804.5 1044.5 L805.6 1054.1 L806.5 1084.7 L808.1 1091.2 L809.5 1090.9 L810.9 1093.6 L812.1 1092.6 L813.3 1089.6 L814.5 1090.4 L815.7 1092.8 L816.5 1079.9 L818.1 1076.7 L819.7 1081.5 L820.5 1007.5 L821.7 1001.0 L822.6 1009.1 L823.8 991.4 L825.4 981.7 L826.2 961.6 L829.4 960.8 L837.5 963.2 L848.7 969.6 L861.6 977.7 L874.5 985.7 L887.4 991.4 L896.2 993.0 L897.8 976.9 L899.0 972.0 L900.2 983.3 L901.9 997.8 L903.8 978.5 L905.4 980.1 L906.7 1005.8 L908.3 983.3 L909.1 1012.3 L909.9 1018.7 L911.5 1044.5 L912.8 1055.8 L914.4 1050.9 L916.3 1067.0 L918.0 1096.0 L919.2 1096.0 L920.4 1097.6 L922.0 1097.5 L923.6 1094.4 L924.8 1095.1 L926.0 1096.0 L927.6 1096.2 L929.2 1094.4 L930.8 1094.7 L932.4 1095.2 L934.0 1089.6 L937.3 1089.6 L942.1 1092.0 L948.5 1095.2 L951.8 1093.6 L953.4 1095.2 L955.0 1096.0 L956.2 1095.4 L957.4 1097.2 L958.6 1098.3 L959.8 1097.6 L961.0 1096.9 L962.2 1096.7 L963.4 1095.7 L964.6 1094.4 L966.3 1089.6 L967.9 1094.4 L969.1 1089.9 L970.3 1088.0 L971.9 1094.4 L973.1 1093.2 L974.3 1090.4 L975.9 1094.4 L977.1 1093.5 L978.3 1091.4 L979.5 1089.4 L980.8 1089.6 L982.4 1092.7 L984.0 1093.6 L985.2 1093.9 L986.4 1094.4 L987.6 1094.2 L988.8 1092.8 L993.6 1076.7 L1001.7 1039.7 L1006.5 1009.1 L1008.1 1006.2 L1009.7 1001.0 L1011.3 1009.1 L1013.0 1002.6 L1014.6 1010.7 L1016.2 1000.2 L1017.8 1010.7 L1019.4 984.9 L1020.2 1010.7 L1021.0 1031.6 L1022.6 1044.5 L1024.2 1055.8 L1025.8 1062.2" fill="none" stroke="#3f51b5" stroke-width="1.9" stroke-linejoin="round"/></svg>
<div style="position:absolute;left:691.5px;top:1287.7px;width:36.5px;height:55.8px;box-sizing:border-box;border:3px solid #e6e8ec;border-radius:8px;background:linear-gradient(to bottom,#cdd1d8 0%,#e2e5e9 25%,#ffffff 50%,#e2e5e9 75%,#c8cdd5 100%);box-shadow:0 16px 16px -6px rgba(0,0,0,0.09)"></div>
<div style="position:absolute;left:689.8px;width:40px;text-align:center;top:1299.4px;font-family:'Liberation Serif', serif;font-size:30px;line-height:30px;color:#111827;font-weight:400;-webkit-text-stroke:0.3px #111827">o</div>
<div style="position:absolute;left:743.6px;top:1287.7px;width:30.7px;height:55.8px;box-sizing:border-box;border:3px solid #e6e8ec;border-radius:8px;background:linear-gradient(to bottom,#cdd1d8 0%,#e2e5e9 25%,#ffffff 50%,#e2e5e9 75%,#c8cdd5 100%);box-shadow:0 16px 16px -6px rgba(0,0,0,0.09)"></div>
<div style="position:absolute;left:739.0px;width:40px;text-align:center;top:1306.6px;font-family:'Liberation Serif', serif;font-size:21.5px;line-height:21.5px;color:#111827;font-weight:400;-webkit-text-stroke:0.3px #111827">1</div>
<div style="position:absolute;left:790.7px;top:1287.7px;width:35.0px;height:55.8px;box-sizing:border-box;border:3px solid #e6e8ec;border-radius:8px;background:linear-gradient(to bottom,#cdd1d8 0%,#e2e5e9 25%,#ffffff 50%,#e2e5e9 75%,#c8cdd5 100%);box-shadow:0 16px 16px -6px rgba(0,0,0,0.09)"></div>
<div style="position:absolute;left:788.2px;width:40px;text-align:center;top:1302.0px;font-family:'Liberation Serif', serif;font-size:27px;line-height:27px;color:#111827;font-weight:400;-webkit-text-stroke:0.3px #111827">8</div>
<div style="position:absolute;left:841.7px;top:1287.7px;width:33.9px;height:55.8px;box-sizing:border-box;border:3px solid #e6e8ec;border-radius:8px;background:linear-gradient(to bottom,#cdd1d8 0%,#e2e5e9 25%,#ffffff 50%,#e2e5e9 75%,#c8cdd5 100%);box-shadow:0 16px 16px -6px rgba(0,0,0,0.09)"></div>
<div style="position:absolute;left:838.7px;width:40px;text-align:center;top:1302.0px;font-family:'Liberation Serif', serif;font-size:27px;line-height:27px;color:#111827;font-weight:400;-webkit-text-stroke:0.3px #111827">6</div>
<div style="position:absolute;left:891.3px;top:1287.7px;width:33.5px;height:55.8px;box-sizing:border-box;border:3px solid #e6e8ec;border-radius:8px;background:linear-gradient(to bottom,#cdd1d8 0%,#e2e5e9 25%,#ffffff 50%,#e2e5e9 75%,#c8cdd5 100%);box-shadow:0 16px 16px -6px rgba(0,0,0,0.09)"></div>
<div style="position:absolute;left:888.0px;width:40px;text-align:center;top:1306.2px;font-family:'Liberation Serif', serif;font-size:27px;line-height:27px;color:#111827;font-weight:400;-webkit-text-stroke:0.3px #111827">7</div>
<div style="position:absolute;left:939.4px;top:1287.7px;width:33.9px;height:55.8px;box-sizing:border-box;border:3px solid #e6e8ec;border-radius:8px;background:linear-gradient(to bottom,#cdd1d8 0%,#e2e5e9 25%,#ffffff 50%,#e2e5e9 75%,#c8cdd5 100%);box-shadow:0 16px 16px -6px rgba(0,0,0,0.09)"></div>
<div style="position:absolute;left:936.3px;width:40px;text-align:center;top:1306.2px;font-family:'Liberation Serif', serif;font-size:27px;line-height:27px;color:#111827;font-weight:400;-webkit-text-stroke:0.3px #111827">5</div>
<div style="position:absolute;left:989.3px;top:1287.7px;width:34.7px;height:55.8px;box-sizing:border-box;border:3px solid #e6e8ec;border-radius:8px;background:linear-gradient(to bottom,#cdd1d8 0%,#e2e5e9 25%,#ffffff 50%,#e2e5e9 75%,#c8cdd5 100%);box-shadow:0 16px 16px -6px rgba(0,0,0,0.09)"></div>
<div style="position:absolute;left:986.6px;width:40px;text-align:center;top:1302.0px;font-family:'Liberation Serif', serif;font-size:27px;line-height:27px;color:#111827;font-weight:400;-webkit-text-stroke:0.3px #111827">6</div>
<div style="position:absolute;left:1068px;top:786px;width:564px;height:640px;background:#fff;border:1px solid #e3e5e9;border-radius:19px"></div><div style="position:absolute;left:1069px;top:889px;width:564px;height:1px;background:#e5e7eb"></div><div style="position:absolute;left:1257px;top:890px;width:1px;height:536px;background:#e5e7eb"></div><div style="position:absolute;top:810.29px;font-size:28.6px;line-height:28.6px;color:#000000;font-weight:400;letter-spacing:0.95px;white-space:nowrap;font-family:'Liberation Sans', sans-serif;left:1105.50px;">electricity-6th-floor</div>
<div style="position:absolute;top:850.88px;font-size:21.4px;line-height:21.4px;color:#6b7280;font-weight:400;letter-spacing:0.95px;white-space:nowrap;font-family:'Liberation Sans', sans-serif;left:1105.50px;">electricity</div>
<svg style="position:absolute;left:1593px;top:816px" width="20" height="45" viewBox="1593 816 20 45"><circle cx="1603" cy="827.0" r="3.6" fill="#9ca3af"/><circle cx="1603" cy="837.9" r="3.6" fill="#9ca3af"/><circle cx="1603" cy="848.7" r="3.6" fill="#9ca3af"/></svg><div style="position:absolute;top:1207.88px;font-size:21.4px;line-height:21.4px;color:#6b7280;font-weight:400;letter-spacing:0.5px;white-space:nowrap;font-family:'Liberation Sans', sans-serif;right:30.00px;">19 mins ago</div>
<div style="position:absolute;top:894.35px;font-size:65.5px;line-height:65.5px;color:#6b7280;font-weight:400;letter-spacing:0px;white-space:nowrap;font-family:'Liberation Sans', sans-serif;left:1073.05px;transform:scaleX(1.107);transform-origin:0 0;">839</div>
<div style="position:absolute;top:896.40px;font-size:30px;line-height:30px;color:#6b7280;font-weight:400;letter-spacing:0px;white-space:nowrap;font-family:'Liberation Sans', sans-serif;left:1192.60px;-webkit-text-stroke:0.55px currentColor;">kWh</div>
<div style="position:absolute;top:1061.55px;font-size:65.5px;line-height:65.5px;color:#9ca3af;font-weight:400;letter-spacing:0px;white-space:nowrap;font-family:'Liberation Sans', sans-serif;left:1099.05px;transform:scaleX(1.026);transform-origin:0 0;">247</div>
<div style="position:absolute;top:1064.15px;font-size:29px;line-height:29px;color:#9ca3af;font-weight:400;letter-spacing:0px;white-space:nowrap;font-family:'Liberation Sans', sans-serif;left:1209.50px;">€</div>
<div style="position:absolute;top:1231.45px;font-size:65.5px;line-height:65.5px;color:#9ca3af;font-weight:400;letter-spacing:0px;white-space:nowrap;font-family:'Liberation Sans', sans-serif;left:1069.55px;transform:scaleX(1.071);transform-origin:0 0;">392</div>
<div style="position:absolute;top:1233.41px;font-size:30px;line-height:30px;color:#9ca3af;font-weight:400;letter-spacing:0px;white-space:nowrap;font-family:'Liberation Sans', sans-serif;left:1184.40px;">Kg</div>
<div style="position:absolute;top:1277.91px;font-size:30px;line-height:30px;color:#9ca3af;font-weight:400;letter-spacing:0px;white-space:nowrap;font-family:'Liberation Sans', sans-serif;left:1185.00px;">CO</div>
<div style="position:absolute;top:1296.82px;font-size:21px;line-height:21px;color:#9ca3af;font-weight:400;letter-spacing:0px;white-space:nowrap;font-family:'Liberation Sans', sans-serif;left:1227.50px;">2</div>
<svg style="position:absolute;left:1258px;top:890px;overflow:visible" width="374" height="380" viewBox="1258 890 374 380"><defs><linearGradient id="g1068786" x1="0" y1="0" x2="0" y2="1"><stop offset="0" stop-color="#5c6bc0" stop-opacity="0.45"/><stop offset="1" stop-color="#5c6bc0" stop-opacity="0.15"/></linearGradient></defs><line x1="1357" x2="1613" y1="943.7" y2="943.7" stroke="#e0e0e0" stroke-width="1.3"/><text x="1338" y="948.0" text-anchor="end" font-family="Liberation Sans" font-size="19.5" fill="#333">18.00</text><line x1="1357" x2="1613" y1="970.2" y2="970.2" stroke="#e0e0e0" stroke-width="1.3"/><text x="1338" y="974.5" text-anchor="end" font-family="Liberation Sans" font-size="19.5" fill="#333">15.00</text><line x1="1357" x2="1613" y1="996.8" y2="996.8" stroke="#e0e0e0" stroke-width="1.3"/><text x="1338" y="1001.1" text-anchor="end" font-family="Liberation Sans" font-size="19.5" fill="#333">12.00</text><line x1="1357" x2="1613" y1="1023.3" y2="1023.3" stroke="#e0e0e0" stroke-width="1.3"/><text x="1338" y="1027.6" text-anchor="end" font-family="Liberation Sans" font-size="19.5" fill="#333">9.00</text><line x1="1357" x2="1613" y1="1049.8" y2="1049.8" stroke="#e0e0e0" stroke-width="1.3"/><text x="1338" y="1054.1" text-anchor="end" font-family="Liberation Sans" font-size="19.5" fill="#333">6.00</text><line x1="1357" x2="1613" y1="1076.4" y2="1076.4" stroke="#e0e0e0" stroke-width="1.3"/><text x="1338" y="1080.7" text-anchor="end" font-family="Liberation Sans" font-size="19.5" fill="#333">3.00</text><line x1="1357" x2="1613" y1="1102.9" y2="1102.9" stroke="#e0e0e0" stroke-width="1.3"/><text x="1338" y="1107.2" text-anchor="end" font-family="Liberation Sans" font-size="19.5" fill="#333">0.00</text><line x1="1357" x2="1613" y1="1104.1" y2="1104.1" stroke="#dcdcdc" stroke-width="2.4"/><line x1="1358.3" x2="1358.3" y1="1104.9" y2="1115.9" stroke="#e0e0e0" stroke-width="1.3"/><text x="1358.3" y="1148" text-anchor="middle" font-family="Liberation Sans" font-size="19.8" letter-spacing="0.6" fill="#333">27 Sep</text><line x1="1469.4" x2="1469.4" y1="1104.9" y2="1115.9" stroke="#e0e0e0" stroke-width="1.3"/><text x="1469.4" y="1148" text-anchor="middle" font-family="Liberation Sans" font-size="19.8" letter-spacing="0.6" fill="#333">30 Sep</text><line x1="1579.8" x2="1579.8" y1="1104.9" y2="1115.9" stroke="#e0e0e0" stroke-width="1.3"/><text x="1579.8" y="1148" text-anchor="middle" font-family="Liberation Sans" font-size="19.8" letter-spacing="0.6" fill="#333">03 Oct</text><path d="M1357.0 1073.5 L1357.8 1075.9 L1359.0 1074.3 L1360.2 1074.3 L1361.5 1073.5 L1362.7 1075.1 L1363.9 1074.4 L1365.1 1074.3 L1365.9 1063.8 L1367.1 1061.2 L1368.3 1060.6 L1369.5 1041.6 L1370.7 1025.2 L1371.5 1018.7 L1373.1 1028.4 L1374.7 1039.7 L1375.5 1031.6 L1376.0 959.1 L1376.8 1034.8 L1378.8 1036.4 L1379.6 1015.5 L1380.4 1034.8 L1382.0 1049.3 L1383.3 1049.3 L1384.7 1051.1 L1386.0 1050.1 L1387.6 1060.6 L1388.8 1060.7 L1390.0 1059.0 L1391.2 1060.6 L1392.5 1060.6 L1394.1 1076.7 L1395.3 1076.7 L1396.5 1078.3 L1397.7 1078.2 L1398.9 1077.2 L1400.1 1076.7 L1401.3 1077.5 L1402.9 1067.0 L1404.5 1065.4 L1406.1 1026.8 L1407.3 1023.2 L1408.5 1021.9 L1409.3 988.1 L1410.6 1012.3 L1411.8 1044.5 L1412.9 978.5 L1413.9 1031.6 L1420.6 1030.8 L1433.5 1028.4 L1449.6 1023.2 L1465.7 1018.7 L1483.4 1017.9 L1484.2 1009.1 L1485.3 1018.7 L1486.6 1044.5 L1487.9 1034.8 L1489.8 1047.7 L1491.5 1048.5 L1493.1 1050.9 L1494.7 1053.8 L1496.3 1054.1 L1497.9 1057.4 L1499.8 1054.1 L1500.3 1059.0 L1501.9 1060.4 L1503.5 1059.8 L1504.3 1075.1 L1505.9 1076.0 L1507.6 1075.1 L1508.8 1075.8 L1510.1 1073.8 L1511.4 1074.0 L1512.7 1074.8 L1514.0 1074.3 L1515.3 1075.0 L1516.6 1075.3 L1517.9 1075.4 L1519.2 1073.0 L1520.4 1074.3 L1522.0 1075.1 L1530.1 1075.9 L1538.2 1076.7 L1539.3 1077.0 L1540.5 1077.2 L1541.6 1076.7 L1542.8 1075.7 L1543.9 1076.6 L1545.1 1075.4 L1546.2 1076.7 L1547.4 1077.9 L1548.5 1077.5 L1549.7 1076.5 L1550.8 1075.6 L1552.0 1077.3 L1553.1 1076.2 L1554.3 1075.9 L1555.4 1076.9 L1556.6 1076.7 L1557.7 1075.6 L1558.9 1075.2 L1560.0 1075.6 L1561.2 1075.0 L1562.3 1075.1 L1563.5 1073.9 L1564.7 1074.1 L1565.9 1075.4 L1567.1 1072.9 L1568.3 1072.7 L1569.6 1074.2 L1570.8 1073.0 L1572.0 1073.5 L1573.2 1074.4 L1574.4 1075.1 L1576.0 1075.1 L1581.6 1065.4 L1591.3 1047.7 L1596.9 1041.3 L1598.5 1046.1 L1600.1 1046.1 L1601.3 1006.6 L1602.6 1047.7 L1604.2 1050.9 L1605.4 1051.6 L1606.6 1052.5 L1607.8 1054.5 L1609.0 1057.4 L1610.6 1060.5 L1612.2 1060.6 L1613.0 1065.4 L1613.0 1102.9 L1357.0 1102.9 Z" fill="url(#g1068786)" stroke="none"/><path d="M1357.0 1073.5 L1357.8 1075.9 L1359.0 1074.3 L1360.2 1074.3 L1361.5 1073.5 L1362.7 1075.1 L1363.9 1074.4 L1365.1 1074.3 L1365.9 1063.8 L1367.1 1061.2 L1368.3 1060.6 L1369.5 1041.6 L1370.7 1025.2 L1371.5 1018.7 L1373.1 1028.4 L1374.7 1039.7 L1375.5 1031.6 L1376.0 959.1 L1376.8 1034.8 L1378.8 1036.4 L1379.6 1015.5 L1380.4 1034.8 L1382.0 1049.3 L1383.3 1049.3 L1384.7 1051.1 L1386.0 1050.1 L1387.6 1060.6 L1388.8 1060.7 L1390.0 1059.0 L1391.2 1060.6 L1392.5 1060.6 L1394.1 1076.7 L1395.3 1076.7 L1396.5 1078.3 L1397.7 1078.2 L1398.9 1077.2 L1400.1 1076.7 L1401.3 1077.5 L1402.9 1067.0 L1404.5 1065.4 L1406.1 1026.8 L1407.3 1023.2 L1408.5 1021.9 L1409.3 988.1 L1410.6 1012.3 L1411.8 1044.5 L1412.9 978.5 L1413.9 1031.6 L1420.6 1030.8 L1433.5 1028.4 L1449.6 1023.2 L1465.7 1018.7 L1483.4 1017.9 L1484.2 1009.1 L1485.3 1018.7 L1486.6 1044.5 L1487.9 1034.8 L1489.8 1047.7 L1491.5 1048.5 L1493.1 1050.9 L1494.7 1053.8 L1496.3 1054.1 L1497.9 1057.4 L1499.8 1054.1 L1500.3 1059.0 L1501.9 1060.4 L1503.5 1059.8 L1504.3 1075.1 L1505.9 1076.0 L1507.6 1075.1 L1508.8 1075.8 L1510.1 1073.8 L1511.4 1074.0 L1512.7 1074.8 L1514.0 1074.3 L1515.3 1075.0 L1516.6 1075.3 L1517.9 1075.4 L1519.2 1073.0 L1520.4 1074.3 L1522.0 1075.1 L1530.1 1075.9 L1538.2 1076.7 L1539.3 1077.0 L1540.5 1077.2 L1541.6 1076.7 L1542.8 1075.7 L1543.9 1076.6 L1545.1 1075.4 L1546.2 1076.7 L1547.4 1077.9 L1548.5 1077.5 L1549.7 1076.5 L1550.8 1075.6 L1552.0 1077.3 L1553.1 1076.2 L1554.3 1075.9 L1555.4 1076.9 L1556.6 1076.7 L1557.7 1075.6 L1558.9 1075.2 L1560.0 1075.6 L1561.2 1075.0 L1562.3 1075.1 L1563.5 1073.9 L1564.7 1074.1 L1565.9 1075.4 L1567.1 1072.9 L1568.3 1072.7 L1569.6 1074.2 L1570.8 1073.0 L1572.0 1073.5 L1573.2 1074.4 L1574.4 1075.1 L1576.0 1075.1 L1581.6 1065.4 L1591.3 1047.7 L1596.9 1041.3 L1598.5 1046.1 L1600.1 1046.1 L1601.3 1006.6 L1602.6 1047.7 L1604.2 1050.9 L1605.4 1051.6 L1606.6 1052.5 L1607.8 1054.5 L1609.0 1057.4 L1610.6 1060.5 L1612.2 1060.6 L1613.0 1065.4" fill="none" stroke="#3f51b5" stroke-width="1.9" stroke-linejoin="round"/></svg>
<div style="position:absolute;left:1280.7px;top:1288.0px;width:35.6px;height:56.0px;box-sizing:border-box;border:3px solid #e6e8ec;border-radius:8px;background:linear-gradient(to bottom,#cdd1d8 0%,#e2e5e9 25%,#ffffff 50%,#e2e5e9 75%,#c8cdd5 100%);box-shadow:0 16px 16px -6px rgba(0,0,0,0.09)"></div>
<div style="position:absolute;left:1278.5px;width:40px;text-align:center;top:1299.7px;font-family:'Liberation Serif', serif;font-size:30px;line-height:30px;color:#111827;font-weight:400;-webkit-text-stroke:0.3px #111827">o</div>
<div style="position:absolute;left:1331.3px;top:1288.0px;width:32.0px;height:56.0px;box-sizing:border-box;border:3px solid #e6e8ec;border-radius:8px;background:linear-gradient(to bottom,#cdd1d8 0%,#e2e5e9 25%,#ffffff 50%,#e2e5e9 75%,#c8cdd5 100%);box-shadow:0 16px 16px -6px rgba(0,0,0,0.09)"></div>
<div style="position:absolute;left:1327.3px;width:40px;text-align:center;top:1306.9px;font-family:'Liberation Serif', serif;font-size:21.5px;line-height:21.5px;color:#111827;font-weight:400;-webkit-text-stroke:0.3px #111827">1</div>
<div style="position:absolute;left:1378.6px;top:1288.0px;width:34.5px;height:56.0px;box-sizing:border-box;border:3px solid #e6e8ec;border-radius:8px;background:linear-gradient(to bottom,#cdd1d8 0%,#e2e5e9 25%,#ffffff 50%,#e2e5e9 75%,#c8cdd5 100%);box-shadow:0 16px 16px -6px rgba(0,0,0,0.09)"></div>
<div style="position:absolute;left:1375.8px;width:40px;text-align:center;top:1302.2px;font-family:'Liberation Serif', serif;font-size:27px;line-height:27px;color:#111827;font-weight:400;-webkit-text-stroke:0.3px #111827">6</div>
<div style="position:absolute;left:1428.5px;top:1288.0px;width:34.5px;height:56.0px;box-sizing:border-box;border:3px solid #e6e8ec;border-radius:8px;background:linear-gradient(to bottom,#cdd1d8 0%,#e2e5e9 25%,#ffffff 50%,#e2e5e9 75%,#c8cdd5 100%);box-shadow:0 16px 16px -6px rgba(0,0,0,0.09)"></div>
<div style="position:absolute;left:1425.8px;width:40px;text-align:center;top:1306.9px;font-family:'Liberation Serif', serif;font-size:21.5px;line-height:21.5px;color:#111827;font-weight:400;-webkit-text-stroke:0.3px #111827">2</div>
<div style="position:absolute;left:1478.3px;top:1288.0px;width:31.3px;height:56.0px;box-sizing:border-box;border:3px solid #e6e8ec;border-radius:8px;background:linear-gradient(to bottom,#cdd1d8 0%,#e2e5e9 25%,#ffffff 50%,#e2e5e9 75%,#c8cdd5 100%);box-shadow:0 16px 16px -6px rgba(0,0,0,0.09)"></div>
<div style="position:absolute;left:1473.9px;width:40px;text-align:center;top:1306.9px;font-family:'Liberation Serif', serif;font-size:21.5px;line-height:21.5px;color:#111827;font-weight:400;-webkit-text-stroke:0.3px #111827">1</div>
<div style="position:absolute;left:1525.6px;top:1288.0px;width:35.3px;height:56.0px;box-sizing:border-box;border:3px solid #e6e8ec;border-radius:8px;background:linear-gradient(to bottom,#cdd1d8 0%,#e2e5e9 25%,#ffffff 50%,#e2e5e9 75%,#c8cdd5 100%);box-shadow:0 16px 16px -6px rgba(0,0,0,0.09)"></div>
<div style="position:absolute;left:1523.2px;width:40px;text-align:center;top:1306.5px;font-family:'Liberation Serif', serif;font-size:27px;line-height:27px;color:#111827;font-weight:400;-webkit-text-stroke:0.3px #111827">9</div>
<div style="position:absolute;left:1575.5px;top:1288.0px;width:35.2px;height:56.0px;box-sizing:border-box;border:3px solid #e6e8ec;border-radius:8px;background:linear-gradient(to bottom,#cdd1d8 0%,#e2e5e9 25%,#ffffff 50%,#e2e5e9 75%,#c8cdd5 100%);box-shadow:0 16px 16px -6px rgba(0,0,0,0.09)"></div>
<div style="position:absolute;left:1573.1px;width:40px;text-align:center;top:1306.5px;font-family:'Liberation Serif', serif;font-size:27px;line-height:27px;color:#111827;font-weight:400;-webkit-text-stroke:0.3px #111827">9</div>

<div style="position:absolute;left:0;top:0;width:1646px;height:2px;background:#313235"></div><div style="position:absolute;left:0;top:2px;width:1646px;height:2px;background:#6c6c6e"></div><div style="position:absolute;left:0;top:4px;width:1646px;height:101px;background:#374151;box-shadow:0 1px 1px rgba(0,0,0,0.18)"></div><svg style="position:absolute;left:0;top:0" width="320" height="105" viewBox="0 0 320 105">
<circle cx="68.4" cy="56.2" r="32.2" fill="none" stroke="#fff" stroke-width="2.4"/>
<circle cx="68.4" cy="56.5" r="22.8" fill="#fff"/>
<circle cx="68.3" cy="23.8" r="4.9" fill="#fff"/>
<circle cx="100.4" cy="56.2" r="4.9" fill="#fff"/>
</svg><div style="position:absolute;top:37.83px;font-size:36px;line-height:36px;color:#ffffff;font-weight:400;letter-spacing:0.05px;white-space:nowrap;font-family:'Liberation Sans', sans-serif;left:116.00px;-webkit-text-stroke:0.6px #374151;">coreThings</div>
<div style="position:absolute;left:495px;top:18px;width:516px;height:60px;border:1px solid #a3a9b4;border-radius:10px"></div><svg style="position:absolute;left:542.7px;top:28.2px;overflow:visible" width="30.7" height="30.6" viewBox="2.25 2.25 19.5 18.5" preserveAspectRatio="none" fill="none" stroke="#d1d5db" stroke-width="1.6" stroke-linecap="round" stroke-linejoin="round"><path d="M3 9a2 2 0 0 1 2 -2h14a2 2 0 0 1 2 2v9a2 2 0 0 1 -2 2h-14a2 2 0 0 1 -2 -2z"/><path d="M8 7v-2a2 2 0 0 1 2 -2h4a2 2 0 0 1 2 2v2"/><path d="M12 12l0 .01"/><path d="M3 13a20 20 0 0 0 18 0"/></svg>
<svg style="position:absolute;left:958.2px;top:38.0px;overflow:visible" width="25.0" height="14.9" viewBox="5.4 8.4 13.2 7.2" preserveAspectRatio="none" fill="none" stroke="#e5e7eb" stroke-width="1.2" stroke-linecap="round" stroke-linejoin="round"><path d="M6 9l6 6l6 -6"/></svg>
<svg style="position:absolute;left:1393px;top:18px" width="72" height="72" viewBox="0 0 80 80">
<defs><clipPath id="av"><circle cx="40" cy="40" r="40"/></clipPath>
<linearGradient id="face" x1="0" y1="0" x2="1" y2="0"><stop offset="0" stop-color="#b0b0b0"/><stop offset="0.3" stop-color="#e8e8e8"/><stop offset="0.7" stop-color="#f0f0f0"/><stop offset="1" stop-color="#c8c8c8"/></linearGradient></defs>
<g clip-path="url(#av)">
<rect width="80" height="80" fill="#fff"/>
<path d="M4 80 L10 64 Q16 58 24 57 L26 74 L22 80Z" fill="#3c3c3c"/>
<path d="M76 80 L70 64 Q64 60 56 60 L55 74 L60 80Z" fill="#444"/>
<path d="M30 54 L50 54 L53 66 Q40 72 27 66Z" fill="#bdbdbd"/>
<path d="M23 32 Q22 52 30 60 Q40 68 50 60 Q57 52 57 32 Q52 18 40 17 Q27 18 23 32Z" fill="url(#face)"/>
<path d="M18 30 Q15 16 24 9 Q32 2 44 3 Q58 5 64 15 Q68 24 66 34 Q64 42 61 50 Q60 38 57 30 Q55 22 50 19 Q40 15 30 19 Q25 23 23 30 Q22 36 22 42 Q19 37 18 30Z" fill="#2a2a2a"/>
<path d="M20 18 Q24 12 30 10 M56 10 Q62 14 64 20" stroke="#555" stroke-width="2" fill="none"/>
<path d="M27 30 Q31 28 36 30 M44 30 Q48 28 52 30" stroke="#3a3a3a" stroke-width="2" fill="none"/>
<path d="M28 33 L35 33 M45 33 L51 33" stroke="#555" stroke-width="1.8"/>
<path d="M39 34 L36 44 L42 45" stroke="#888" stroke-width="1.8" fill="none"/>
<path d="M33 51 Q40 49 46 51" stroke="#555" stroke-width="1.8" fill="none"/>
</g></svg><div style="position:absolute;top:28.18px;font-size:24.6px;line-height:24.6px;color:#e5e7eb;font-weight:700;letter-spacing:0px;white-space:nowrap;font-family:'Liberation Sans', sans-serif;left:1487.00px;-webkit-text-stroke:0.3px #374151;">Don O'Leary</div>
<div style="position:absolute;top:62.39px;font-size:20.8px;line-height:20.8px;color:#9ca3af;font-weight:700;letter-spacing:0px;white-space:nowrap;font-family:'Liberation Sans', sans-serif;left:1487.00px;-webkit-text-stroke:0.4px #374151;">Logout</div>
<div style="position:absolute;left:0;top:105px;width:459px;height:1058px;background:#ffffff"></div><div style="position:absolute;left:0;top:1163px;width:459px;height:217px;background:#e5e7eb"></div><svg style="position:absolute;left:32.1px;top:131.4px;overflow:visible" width="32.8" height="32.9" viewBox="3.25 3.25 17.5 17.5" preserveAspectRatio="none" fill="none" stroke="#9ca3af" stroke-width="1.75" stroke-linecap="round" stroke-linejoin="round"><path d="M4 5a1 1 0 0 1 1 -1h4a1 1 0 0 1 1 1v4a1 1 0 0 1 -1 1h-4a1 1 0 0 1 -1 -1z"/><path d="M14 5a1 1 0 0 1 1 -1h4a1 1 0 0 1 1 1v4a1 1 0 0 1 -1 1h-4a1 1 0 0 1 -1 -1z"/><path d="M4 15a1 1 0 0 1 1 -1h4a1 1 0 0 1 1 1v4a1 1 0 0 1 -1 1h-4a1 1 0 0 1 -1 -1z"/><path d="M14 15a1 1 0 0 1 1 -1h4a1 1 0 0 1 1 1v4a1 1 0 0 1 -1 1h-4a1 1 0 0 1 -1 -1z"/></svg>
<svg style="position:absolute;left:30.7px;top:211.4px;overflow:visible" width="35.4" height="31.6" viewBox="2.25 3.25 19.5 17.5" preserveAspectRatio="none" fill="none" stroke="#9ca3af" stroke-width="1.75" stroke-linecap="round" stroke-linejoin="round"><path d="M5 7h1a2 2 0 0 0 2 -2a1 1 0 0 1 1 -1h6a1 1 0 0 1 1 1a2 2 0 0 0 2 2h1a2 2 0 0 1 2 2v9a2 2 0 0 1 -2 2h-14a2 2 0 0 1 -2 -2v-9a2 2 0 0 1 2 -2"/><path d="M9 13a3 3 0 1 0 6 0a3 3 0 0 0 -6 0"/></svg>
<svg style="position:absolute;left:31.0px;top:289.0px;overflow:visible" width="34.8" height="35.0" viewBox="2.25 2.25 19.5 19.5" preserveAspectRatio="none" fill="none" stroke="#9ca3af" stroke-width="1.75" stroke-linecap="round" stroke-linejoin="round"><path d="M3 12h1m8 -9v1m8 8h1m-15.4 -6.4l.7 .7m12.1 -.7l-.7 .7"/><path d="M9 16a5 5 0 1 1 6 0a3.5 3.5 0 0 0 -1 3a2 2 0 0 1 -4 0a3.5 3.5 0 0 0 -1 -3"/><path d="M9.7 17l4.6 0"/></svg>
<svg style="position:absolute;left:27.9px;top:371.4px;overflow:visible" width="41.1" height="30.0" viewBox="2.765 5.25 18.5 13.5" preserveAspectRatio="none" fill="none" stroke="#9ca3af" stroke-width="1.6" stroke-linecap="round" stroke-linejoin="round"><path d="M12 18l.01 0"/><path d="M9.172 15.172a4 4 0 0 1 5.656 0"/><path d="M6.343 12.343a8 8 0 0 1 11.314 0"/><path d="M3.515 9.515c4.686 -4.687 12.284 -4.687 17 0"/></svg>
<svg style="position:absolute;left:30.2px;top:448.0px;overflow:visible" width="36.9" height="33.0" viewBox="2.4 3.25 19.2 17.5" preserveAspectRatio="none" fill="none" stroke="#9ca3af" stroke-width="1.75" stroke-linecap="round" stroke-linejoin="round"><path d="M5 4c-2.5 5 -2.5 10 0 16m14 -16c2.5 5 2.5 10 0 16m-10 -11h1c1 0 1 1 2.016 3.527c.984 2.473 .984 3.473 1.984 3.473h1"/><path d="M8 16c1.5 0 3 -2 4 -3.5s2.5 -3.5 4 -3.5"/></svg>
<svg style="position:absolute;left:30.7px;top:525.3px;overflow:visible" width="35.5" height="35.5" viewBox="2.25 3.25 19.5 17.5" preserveAspectRatio="none" fill="none" stroke="#9ca3af" stroke-width="1.75" stroke-linecap="round" stroke-linejoin="round"><path d="M3 13a1 1 0 0 1 1 -1h4a1 1 0 0 1 1 1v6a1 1 0 0 1 -1 1h-4a1 1 0 0 1 -1 -1z"/><path d="M9 9a1 1 0 0 1 1 -1h4a1 1 0 0 1 1 1v10a1 1 0 0 1 -1 1h-4a1 1 0 0 1 -1 -1z"/><path d="M15 5a1 1 0 0 1 1 -1h4a1 1 0 0 1 1 1v14a1 1 0 0 1 -1 1h-4a1 1 0 0 1 -1 -1z"/></svg>
<svg style="position:absolute;left:30.7px;top:608.4px;overflow:visible" width="35.5" height="29.2" viewBox="2.25 4.05 19.5 16.4" preserveAspectRatio="none" fill="none" stroke="#6b7280" stroke-width="1.75" stroke-linecap="round" stroke-linejoin="round"><path d="M3 19a9 9 0 0 1 9 0a9 9 0 0 1 9 0"/><path d="M3 6a9 9 0 0 1 9 0a9 9 0 0 1 9 0"/><path d="M3 6l0 13"/><path d="M12 6l0 13"/><path d="M21 6l0 13"/></svg>
<div style="position:absolute;top:135.58px;font-size:25.3px;line-height:25.3px;color:#303a48;font-weight:400;letter-spacing:0px;white-space:nowrap;font-family:'Liberation Sans', sans-serif;left:92.00px;">Dashboard</div>
<div style="position:absolute;top:214.58px;font-size:25.3px;line-height:25.3px;color:#303a48;font-weight:400;letter-spacing:0px;white-space:nowrap;font-family:'Liberation Sans', sans-serif;left:92.00px;">Scan</div>
<div style="position:absolute;top:293.08px;font-size:25.3px;line-height:25.3px;color:#303a48;font-weight:400;letter-spacing:0px;white-space:nowrap;font-family:'Liberation Sans', sans-serif;left:92.00px;">Devices</div>
<div style="position:absolute;top:372.08px;font-size:25.3px;line-height:25.3px;color:#303a48;font-weight:400;letter-spacing:0px;white-space:nowrap;font-family:'Liberation Sans', sans-serif;left:92.00px;">Gateways</div>
<div style="position:absolute;top:452.58px;font-size:25.3px;line-height:25.3px;color:#303a48;font-weight:400;letter-spacing:0.35px;white-space:nowrap;font-family:'Liberation Sans', sans-serif;left:92.00px;">Control Center</div>
<div style="position:absolute;top:532.08px;font-size:25.3px;line-height:25.3px;color:#303a48;font-weight:400;letter-spacing:0px;white-space:nowrap;font-family:'Liberation Sans', sans-serif;left:92.00px;">Reports</div>
<div style="position:absolute;top:610.58px;font-size:25.3px;line-height:25.3px;color:#6b7280;font-weight:400;letter-spacing:0.3px;white-space:nowrap;font-family:'Liberation Sans', sans-serif;left:92.00px;-webkit-text-stroke:0.6px #6b7280">Docs</div>
<div style="position:absolute;left:27px;top:1192px;width:279px;height:76px;border-radius:11px;background:#e5e7eb;box-shadow:0 1px 5px rgba(0,0,0,0.07)"></div><svg style="position:absolute;left:74.8px;top:1210.8px;overflow:visible" width="30.3" height="30.5" viewBox="2.25 2.25 19.5 19.5" preserveAspectRatio="none" fill="none" stroke="#9ca3af" stroke-width="1.5" stroke-linecap="round" stroke-linejoin="round"><path d="M19 21V5a2 2 0 00-2-2H7a2 2 0 00-2 2v16m14 0h2m-2 0h-5m-9 0H3m2 0h5M9 7h1m-1 4h1m4-4h1m-1 4h1m-5 10v-5a1 1 0 011-1h2a1 1 0 011 1v5m-4 0h4"/></svg>
<svg style="position:absolute;left:252.7px;top:1219.4px;overflow:visible" width="24.3" height="14.2" viewBox="5.25 8.25 13.5 7.5" preserveAspectRatio="none" fill="none" stroke="#9ca3af" stroke-width="1.3" stroke-linecap="round" stroke-linejoin="round"><path d="M6 9l6 6l6 -6"/></svg>
<svg style="position:absolute;left:59.4px;top:1325.6px;overflow:visible" width="36.3" height="35.7" viewBox="2.2 2.2 19.6 19.6" preserveAspectRatio="none" fill="none" stroke="#374151" stroke-width="2" stroke-linecap="round" stroke-linejoin="round"><path d="M10.325 4.317c.426 -1.756 2.924 -1.756 3.35 0a1.724 1.724 0 0 0 2.573 1.066c1.543 -.94 3.31 .826 2.37 2.37a1.724 1.724 0 0 0 1.065 2.572c1.756 .426 1.756 2.924 0 3.35a1.724 1.724 0 0 0 -1.066 2.573c.94 1.543 -.826 3.31 -2.37 2.37a1.724 1.724 0 0 0 -2.572 1.065c-.426 1.756 -2.924 1.756 -3.35 0a1.724 1.724 0 0 0 -2.573 -1.066c-1.543 .94 -3.31 -.826 -2.37 -2.37a1.724 1.724 0 0 0 -1.065 -2.572c-1.756 -.426 -1.756 -2.924 0 -3.35a1.724 1.724 0 0 0 1.066 -2.573c-.94 -1.543 .826 -3.31 2.37 -2.37c1 .608 2.296 .07 2.572 -1.065z"/><path d="M9 12a3 3 0 1 0 6 0a3 3 0 0 0 -6 0"/></svg>
<div style="position:absolute;top:1327.12px;font-size:26.2px;line-height:26.2px;color:#2a3441;font-weight:400;letter-spacing:0px;white-space:nowrap;font-family:'Liberation Sans', sans-serif;left:121.00px;">Account Settings</div>
<div style="position:absolute;left:459px;top:105px;width:931px;height:4px;background:linear-gradient(to bottom, rgba(0,0,0,0.05), rgba(0,0,0,0))"></div><div style="position:absolute;left:459px;top:105px;width:1187px;height:1px;background:#fafafa"></div><div style="position:absolute;left:459px;top:105px;width:22px;height:1275px;background:linear-gradient(to right, rgba(0,0,0,0.045), rgba(0,0,0,0))"></div>
<div style="position:absolute;left:0;top:1320px;width:1646px;height:60px;background:linear-gradient(to bottom, rgba(0,0,0,0), rgba(0,0,0,0.035));pointer-events:none"></div>
</body></html>
